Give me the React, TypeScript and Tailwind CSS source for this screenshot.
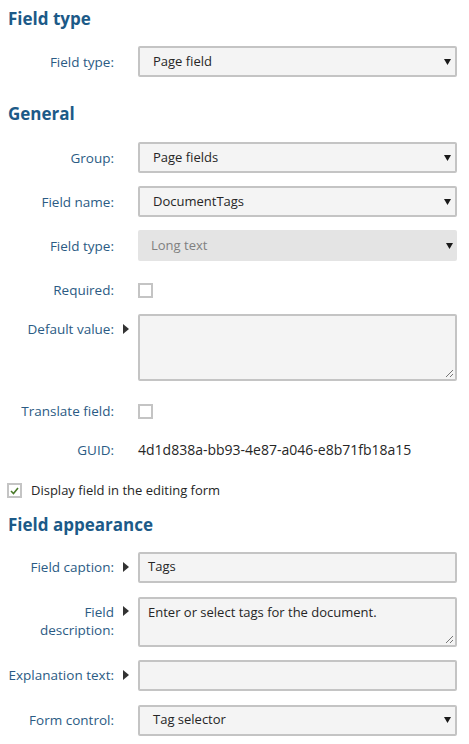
const font = { fontFamily: '"Open Sans", "Noto Sans", sans-serif' };

const Arrow = () => (
  <svg width="6" height="10" viewBox="0 0 6 10" className="shrink-0">
    <path d="M0 0 L6 5 L0 10 Z" fill="#333333" />
  </svg>
);

const Caret = () => (
  <svg width="7" height="6" viewBox="0 0 7 6" className="shrink-0">
    <path d="M0 0 L7 0 L3.5 6 Z" fill="#1a1a1a" />
  </svg>
);

const Resize = () => (
  <svg width="8" height="8" viewBox="0 0 8 8" className="absolute right-[2px] bottom-[2px]">
    <path d="M1 8 L8 1 M5 8 L8 5" stroke="#777777" strokeWidth="1" />
  </svg>
);

const Label = ({ text, arrow, twoLine }: { text: React.ReactNode; arrow?: boolean; twoLine?: boolean }) => (
  <div className={`flex w-[138px] shrink-0 justify-end gap-[9px] pr-[9px] ${twoLine ? "items-start" : "items-center"}`}>
    <span className="text-right text-[13.5px] leading-[18px] text-[#2b5b84]">{text}</span>
    {arrow ? <div className={twoLine ? "pt-[3px]" : ""}><Arrow /></div> : <div className="w-[6px]" />}
  </div>
);

const Select = ({ value, disabled }: { value: string; disabled?: boolean }) => (
  <div
    className={`flex h-[31px] w-[319px] items-center justify-between rounded-[2px] pl-[13px] pr-[4px] text-[13px] ${
      disabled ? "bg-[#e4e4e4] text-[#808080]" : "border-2 border-[#c4c4c4] bg-[#f4f4f4] text-[#262626]"
    }`}
  >
    <span>{value}</span>
    <Caret />
  </div>
);

const Input = ({ value }: { value?: string }) => (
  <div className="flex h-[31px] w-[319px] items-center rounded-[2px] border-2 border-[#c4c4c4] bg-[#f4f4f4] pl-[8px] text-[13px] text-[#262626]">
    {value}
  </div>
);

const TextArea = ({ value, h }: { value?: string; h: string }) => (
  <div className={`relative w-[319px] rounded-[2px] border-2 border-[#c4c4c4] bg-[#f4f4f4] pl-[8px] pt-[4px] text-[13px] text-[#262626] ${h}`}>
    {value}
    <Resize />
  </div>
);

const Checkbox = ({ checked }: { checked?: boolean }) => (
  <div className="flex h-[15px] w-[15px] items-center justify-center border-2 border-[#c4c4c4] bg-white">
    {checked && (
      <svg width="9" height="8" viewBox="0 0 9 8">
        <path d="M1 4 L3.5 6.5 L8 1" fill="none" stroke="#4a7a2a" strokeWidth="1.6" />
      </svg>
    )}
  </div>
);

const Heading = ({ children }: { children: React.ReactNode }) => (
  <h2 className="pl-[8px] text-[17px] font-bold leading-[22px] text-[#1c5a88]">{children}</h2>
);

export default function App() {
  return (
    <div className="h-[744px] w-[469px] bg-white" style={font}>
      <div className="pt-[8px]">
        <Heading>Field type</Heading>
        <div className="mt-[16px] flex items-center">
          <Label text="Field type:" />
          <Select value="Page field" />
        </div>

        <div className="mt-[26px]">
          <Heading>General</Heading>
        </div>
        <div className="mt-[17px] flex flex-col gap-[13px]">
          <div className="flex items-center">
            <Label text="Group:" />
            <Select value="Page fields" />
          </div>
          <div className="flex items-center">
            <Label text="Field name:" />
            <Select value="DocumentTags" />
          </div>
          <div className="flex items-center">
            <Label text="Field type:" />
            <Select value="Long text" disabled />
          </div>
        </div>
        <div className="mt-[20px] flex items-center">
          <Label text="Required:" />
          <Checkbox />
        </div>
        <div className="mt-[15px] flex items-start">
          <div className="pt-[6px]">
            <Label text="Default value:" arrow />
          </div>
          <TextArea h="h-[67px]" />
        </div>
        <div className="mt-[21px] flex items-center">
          <Label text="Translate field:" />
          <Checkbox />
        </div>
        <div className="mt-[19px] flex items-center">
          <Label text="GUID:" />
          <span className="text-[14px] text-[#262626]">4d1d838a-bb93-4e87-a046-e8b71fb18a15</span>
        </div>
        <div className="mt-[21px] flex items-center gap-[9px] pl-[7px]">
          <Checkbox checked />
          <span className="text-[13px] text-[#262626]">Display field in the editing form</span>
        </div>
        <div className="mt-[13px]">
          <Heading>Field appearance</Heading>
        </div>
        <div className="mt-[16px] flex items-center">
          <Label text="Field caption:" arrow />
          <Input value="Tags" />
        </div>
        <div className="mt-[14px] flex items-start">
          <div className="pt-[6px]">
            <Label text={<>Field<br />description:</>} arrow twoLine />
          </div>
          <TextArea value="Enter or select tags for the document." h="h-[50px]" />
        </div>
        <div className="mt-[13px] flex items-center">
          <Label text="Explanation text:" arrow />
          <Input />
        </div>
        <div className="mt-[14px] flex items-center">
          <Label text="Form control:" />
          <Select value="Tag selector" />
        </div>
      </div>
    </div>
  );
}
